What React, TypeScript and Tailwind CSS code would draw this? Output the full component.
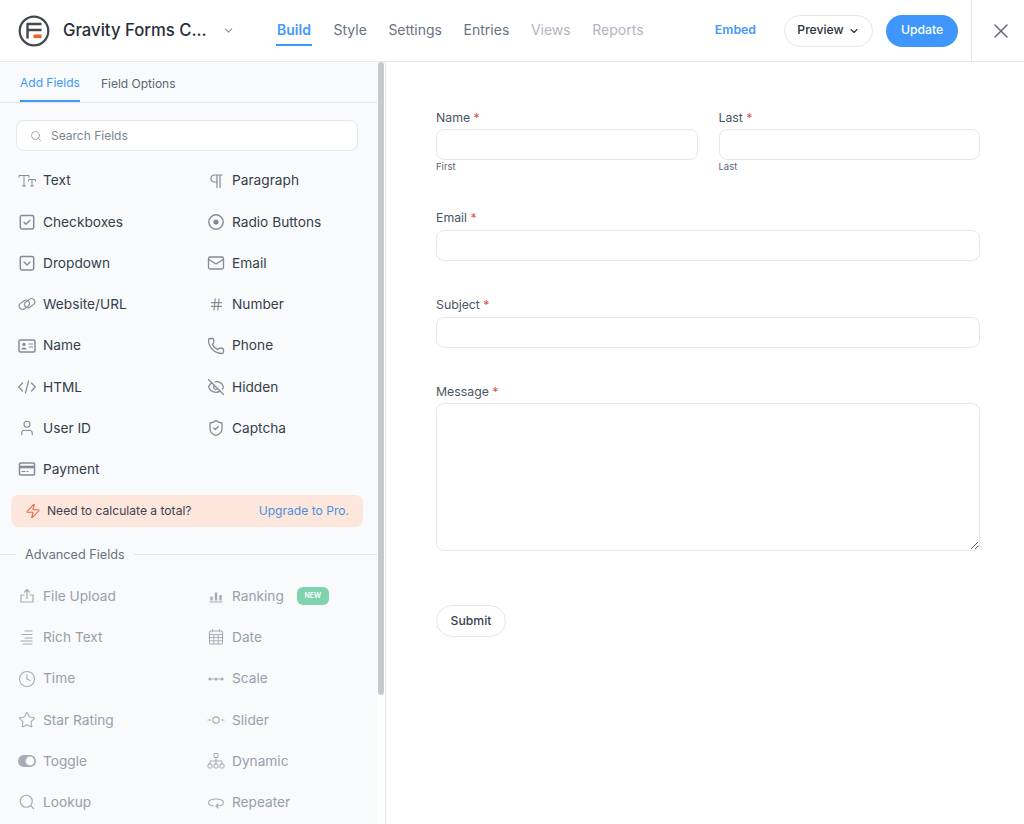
import type { ReactNode } from 'react';
import {
  ChevronDown,
  Clock,
  EyeOff,
  Hash,
  Mail,
  Phone,
  Search,
  ShieldCheck,
  Star,
  User,
  X,
  Zap,
} from 'lucide-react';

type IconProps = { children: ReactNode };

// shared wrapper for the hand drawn field icons
function Draw({ children }: IconProps) {
  return (
    <svg width="18" height="18" viewBox="0 0 18 18" fill="none" stroke="currentColor" strokeWidth="1.2" strokeLinecap="round" strokeLinejoin="round">
      {children}
    </svg>
  );
}

const lucide = { size: 18, strokeWidth: 1.7 };

const TextIcon = (
  <Draw>
    <path d="M1 5.500V3.500h10v2M6 3.500v10.500M4.300 14h3.400M10.500 9V7.500h7V9M14 7.500V14M12.700 14h2.600" strokeWidth="1" />
  </Draw>
);
const ParagraphIcon = (
  <Draw>
    <path d="M15 3H7.500a3.500 3.500 0 0 0 0 7H10M10 3v12.500M13 3v12.500" />
  </Draw>
);
const CheckIcon = (
  <Draw>
    <rect x="2.300" y="2.500" width="13.400" height="13.400" rx="1.600" strokeWidth="1.500" />
    <path d="M6 9.400 8 11.200 12 7.200" strokeWidth="1.400" />
  </Draw>
);
const DropdownIcon = (
  <Draw>
    <rect x="2.300" y="2.500" width="13.400" height="13.400" rx="1.600" strokeWidth="1.500" />
    <path d="M6 8 9 11 12 8" strokeWidth="1.400" />
  </Draw>
);
const RadioIcon = (
  <Draw>
    <circle cx="9" cy="9" r="7.200" strokeWidth="1.400" />
    <circle cx="9" cy="9" r="2.600" fill="currentColor" stroke="none" />
  </Draw>
);
const LinkIcon = (
  <Draw>
    <rect x="0.800" y="6.500" width="11" height="6.500" rx="3.250" transform="rotate(-35 6.300 9.750)" strokeWidth="1.100" />
    <rect x="6.200" y="5" width="11" height="6.500" rx="3.250" transform="rotate(-35 11.700 8.250)" strokeWidth="1.100" />
  </Draw>
);
const NameIcon = (
  <Draw>
    <rect x="1" y="3" width="16" height="12" rx="1.500" strokeWidth="1.500" />
    <circle cx="6" cy="7.400" r="1.700" fill="currentColor" stroke="none" />
    <path d="M3.300 12.500c0-2.700 5.400-2.700 5.400 0z" fill="currentColor" stroke="none" />
    <path d="M11 7h3.500M11 10h3.500" />
  </Draw>
);
const HtmlIcon = (
  <Draw>
    <path d="M4.500 5 .8 9l3.700 4M13.500 5l3.700 4-3.700 4M10.600 3 7.400 15" />
  </Draw>
);
const PaymentIcon = (
  <Draw>
    <rect x="1.500" y="3" width="15" height="12" rx="1" strokeWidth="1.500" />
    <path d="M1.500 7h15" strokeWidth="2.600" strokeLinecap="butt" />
    <path d="M4 11.500h3M9 11.500h1" />
  </Draw>
);
const UploadIcon = (
  <Draw>
    <path d="M6 8H3v7h12V8h-3M9 11.500V2.500M6.500 5 9 2.500 11.500 5" />
  </Draw>
);
const RankingIcon = (
  <Draw>
    <path d="M4.500 9.500v4M9 5.500v8M13.500 8v5.500" strokeWidth="2.400" strokeLinecap="butt" />
    <path d="M3 15h12" strokeWidth="1" />
  </Draw>
);
const RichTextIcon = (
  <Draw>
    <path d="M7 3h7M4 6.500h10M7 10h7M3 13h11M5 16h9" strokeWidth="1.100" />
  </Draw>
);
const DateIcon = (
  <Draw>
    <rect x="2.500" y="3" width="13" height="13" rx="1" strokeWidth="1.100" />
    <path d="M5.500 1.500V4M12.500 1.500V4M2.500 6.500h13M2.500 9.500h13M2.500 12.800h13M6.800 6.500V16M11.200 6.500V16" strokeWidth="0.900" />
  </Draw>
);
const ScaleIcon = (
  <Draw>
    <path d="M2 9h14" strokeWidth="0.900" />
    <circle cx="3" cy="9" r="1.500" fill="currentColor" stroke="none" />
    <circle cx="9" cy="9" r="1.500" fill="currentColor" stroke="none" />
    <circle cx="15" cy="9" r="1.500" fill="currentColor" stroke="none" />
  </Draw>
);
const SliderIcon = (
  <Draw>
    <circle cx="9" cy="9" r="3.200" />
    <path d="M1 9h2.500M14.500 9H17" />
  </Draw>
);
const ToggleIcon = (
  <Draw>
    <rect x="0" y="3" width="18" height="12" rx="6" fill="currentColor" stroke="none" />
    <circle cx="12" cy="9" r="4.400" fill="#f8fafc" stroke="none" />
  </Draw>
);
const DynamicIcon = (
  <Draw>
    <rect x="7" y="1.500" width="4" height="4" rx="0.500" strokeWidth="1" />
    <rect x="1" y="12" width="4" height="4" rx="1" strokeWidth="1" />
    <rect x="7" y="12" width="4" height="4" rx="1" strokeWidth="1" />
    <rect x="13" y="12" width="4" height="4" rx="1" strokeWidth="1" />
    <path d="M9 5.500V12M3 12V9h12v3" strokeWidth="1" />
  </Draw>
);
const RepeaterIcon = (
  <Draw>
    <path d="M6.500 13C3.500 12.800 1.500 11.300 1.500 9.500S4.500 6 9 6s7.500 1.700 7.500 3.500-2.500 3.500-7 3.500M11 11l-2 2 2 2" strokeWidth="1.100" />
  </Draw>
);

const basicFields: [string, ReactNode, string, ReactNode][] = [
  ['Text', TextIcon, 'Paragraph', ParagraphIcon],
  ['Checkboxes', CheckIcon, 'Radio Buttons', RadioIcon],
  ['Dropdown', DropdownIcon, 'Email', <Mail size={18} strokeWidth={1.700} />],
  ['Website/URL', LinkIcon, 'Number', <Hash size={15} strokeWidth={1.700} />],
  ['Name', NameIcon, 'Phone', <Phone {...lucide} />],
  ['HTML', HtmlIcon, 'Hidden', <EyeOff {...lucide} />],
  ['User ID', <User size={20} strokeWidth={1.500} />, 'Captcha', <ShieldCheck {...lucide} />],
  ['Payment', PaymentIcon, '', null],
];

const advancedFields: [string, ReactNode, string, ReactNode][] = [
  ['File Upload', UploadIcon, 'Ranking', RankingIcon],
  ['Rich Text', RichTextIcon, 'Date', DateIcon],
  ['Time', <Clock size={20} strokeWidth={1.500} />, 'Scale', ScaleIcon],
  ['Star Rating', <Star size={20} strokeWidth={1.400} />, 'Slider', SliderIcon],
  ['Toggle', ToggleIcon, 'Dynamic', DynamicIcon],
  ['Lookup', <Search size={20} strokeWidth={1.500} />, 'Repeater', RepeaterIcon],
];

function FieldItem({ label, icon, muted }: { label: string; icon: ReactNode; muted?: boolean }) {
  return (
    <div className={`flex h-[41.25px] items-center gap-[7px] text-[13.7px] ${muted ? 'text-[#98a0ab]' : 'text-[#363e4a]'}`}>
      <span className={`flex h-[18px] w-[18px] shrink-0 items-center justify-center ${muted ? 'text-[#a5acb6]' : 'text-[#858c97]'}`}>{icon}</span>
      <span>{label}</span>
      {label === 'Ranking' && (
        <span className="ml-[6px] flex h-[18px] w-[32px] items-center justify-center rounded-[6px] bg-[#7fd3ae] text-[7px] font-semibold text-white">NEW</span>
      )}
    </div>
  );
}

function FieldGrid({ rows, muted }: { rows: [string, ReactNode, string, ReactNode][]; muted?: boolean }) {
  return (
    <div className="grid grid-cols-[189px_1fr] pl-[18px]">
      {rows.map(([a, aIcon, b, bIcon]) => (
        <div key={a} className="contents">
          <FieldItem label={a} icon={aIcon} muted={muted} />
          {b ? <FieldItem label={b} icon={bIcon} muted={muted} /> : <div />}
        </div>
      ))}
    </div>
  );
}

function Label({ text }: { text: string }) {
  return (
    <label className="block h-5 text-[12.3px] leading-5 text-[#4b5563]">
      {text} <span className="text-[#d9534f]">*</span>
    </label>
  );
}

const inputClass = 'block h-[31px] w-full rounded-[8px] border border-[#e5e7eb] bg-white outline-none';

export default function App() {
  return (
    <div className="flex h-[824px] w-[1024px] flex-col overflow-hidden bg-white font-['Inter',sans-serif]">
      {/* Header */}
      <header className="flex h-[62px] shrink-0 items-center border-b border-[#e6e8eb]">
        <div className="flex w-[276px] items-center pl-[18px]">
          <svg width="32" height="32" viewBox="0 0 32 32" fill="none">
            <circle cx="16" cy="16" r="14.300" stroke="#44484e" strokeWidth="2.200" />
            <path d="M8.500 9h15M9.500 9v14.500M9.500 15h14" stroke="#44484e" strokeWidth="2.400" />
            <path d="M15.500 21.300h8" stroke="#e8622c" strokeWidth="3.600" />
          </svg>
          <span className="ml-[13px] text-[16.7px] font-medium whitespace-nowrap text-[#282f3a]">Gravity Forms C...</span>
          <ChevronDown size={13} className="ml-[15px] text-[#8a919c]" />
        </div>
        <nav className="-mt-[2px] flex items-center gap-[21.6px] text-[14px] text-[#6b7280]">
          <span className="flex h-[32px] items-center border-b-2 border-[#4199fd] px-px pt-0.5 font-semibold text-[#4199fd]">Build</span>
          <span>Style</span>
          <span>Settings</span>
          <span>Entries</span>
          <span className="text-[#b1b6bf]">Views</span>
          <span className="text-[#b1b6bf]">Reports</span>
        </nav>
        <div className="ml-auto flex h-full items-center">
          <span className="text-[12.3px] font-semibold text-[#4199fd]">Embed</span>
          <button className="ml-[28px] flex h-[32px] w-[89px] items-center justify-center gap-1 rounded-full border border-[#e5e7eb] bg-white text-[12.2px] font-medium text-[#282f3a]">
            Preview <ChevronDown size={12} strokeWidth={2.200} />
          </button>
          <button className="ml-[13px] h-[32px] w-[72px] rounded-full bg-[#3f97fb] text-[12.2px] font-medium text-white">Update</button>
          <div className="ml-[13px] flex h-full w-[53px] items-center justify-center border-l border-[#e6e8eb] pl-[6px] text-[#5f6772]">
            <X size={24} strokeWidth={1.400} />
          </div>
        </div>
      </header>

      <div className="flex min-h-0 flex-1">
        {/* Sidebar */}
        <aside className="flex w-[386px] shrink-0 border-r border-[#e6e8eb]">
          <div className="w-[377px] shrink-0 bg-[#f8fafc]">
            <div className="flex h-[41px] gap-[21px] border-b border-[#e2e6ea] pl-[20px] text-[12px]">
              <span className="flex h-full items-center border-b-2 border-[#4199fd] pt-[3px] text-[#4199fd]">Add Fields</span>
              <span className="flex h-full items-center pt-[3px] text-[#5d6571]">Field Options</span>
            </div>
            <div className="mx-[16px] mt-[17px] flex h-[31px] w-[342px] items-center rounded-[8px] border border-[#e5e7eb] bg-white pt-px pl-[13px] text-[12px] text-[#7c8591]">
              <Search size={12} strokeWidth={1.800} className="text-[#9aa1ab]" />
              <span className="ml-[9px]">Search Fields</span>
            </div>
            <div className="mt-[9px]">
              <FieldGrid rows={basicFields} />
            </div>
            <div className="mx-[11px] mt-[5px] flex h-[32px] w-[352px] items-center rounded-[8px] bg-[#fde6dc] pr-[14px] pl-[14px] text-[12.1px] text-[#3c4450]">
              <Zap size={16} strokeWidth={1.600} className="text-[#e8683c]" />
              <span className="ml-[6px]">Need to calculate a total?</span>
              <span className="ml-auto text-[#4a90e2]">Upgrade to Pro.</span>
            </div>
            <div className="mt-[17.5px] flex h-5 items-center text-[12.7px] text-[#687180]">
              <div className="h-px w-[16px] bg-[#e2e6ea]" />
              <span className="px-[9px]">Advanced Fields</span>
              <div className="h-px flex-1 bg-[#e2e6ea]" />
            </div>
            <div className="mt-[11px]">
              <FieldGrid rows={advancedFields} muted />
            </div>
          </div>
          {/* Scrollbar */}
          <div className="w-[8px] bg-white pl-px">
            <div className="h-[633px] w-[6px] rounded-full bg-[#c6c8cb]" />
          </div>
        </aside>

        {/* Form */}
        <main className="flex-1 pt-[46px] pl-[50px]">
          <div className="w-[544px]">
            <div className="grid grid-cols-2 gap-x-[21px]">
              <div>
                <Label text="Name" />
                <input className={`${inputClass} mt-[1px]`} />
                <p className="mt-[1px] h-[12px] text-[9.5px] leading-[12px] text-[#5d6571]">First</p>
              </div>
              <div>
                <Label text="Last" />
                <input className={`${inputClass} mt-[1px]`} />
                <p className="mt-[1px] h-[12px] text-[9.5px] leading-[12px] text-[#5d6571]">Last</p>
              </div>
            </div>
            <div className="mt-[35px]">
              <Label text="Email" />
              <input className={`${inputClass} mt-[2px]`} />
            </div>
            <div className="mt-[34px]">
              <Label text="Subject" />
              <input className={`${inputClass} mt-[2px]`} />
            </div>
            <div className="mt-[34px]">
              <Label text="Message" />
              <textarea className="mt-[1px] block h-[148px] w-full rounded-[8px] border border-[#e5e7eb] bg-white outline-none" />
            </div>
            <button className="mt-[54px] h-[32px] w-[70px] rounded-full border border-[#e5e7eb] bg-white text-[12.2px] font-medium text-[#3c4450]">Submit</button>
          </div>
        </main>
      </div>
    </div>
  );
}
